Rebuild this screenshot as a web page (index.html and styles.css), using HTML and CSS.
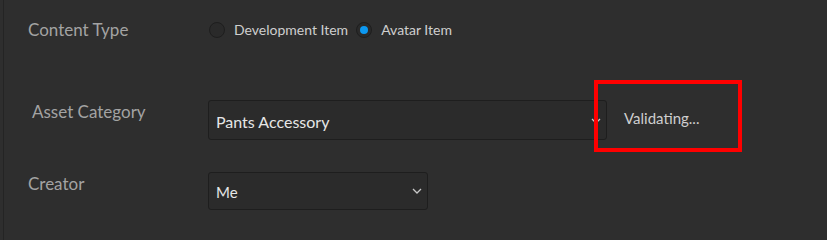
FILE: index.html
```html
<!DOCTYPE html>
<html>
<head>
<meta charset="utf-8">
<link rel="stylesheet" href="styles.css">
</head>
<body>
<div class="panel">
  <div class="row row-type">
    <span class="label">Content Type</span>
    <div class="radios">
      <span class="radio"></span><span class="radio-text">Development Item</span>
      <span class="radio radio-on"><span class="dot"></span></span><span class="radio-text">Avatar Item</span>
    </div>
  </div>
  <div class="row row-cat">
    <span class="label label-cat">Asset Category</span>
    <div class="select select-wide">
      <span class="select-text">Pants Accessory</span>
      <svg class="chev" width="10" height="6" viewBox="0 0 10 6"><path d="M1 1 L5 5 L9 1" fill="none" stroke="#c8c8c8" stroke-width="1.3"/></svg>
    </div>
    <span class="status">Validating...</span>
    <div class="highlight"></div>
  </div>
  <div class="row row-creator">
    <span class="label">Creator</span>
    <div class="select select-narrow">
      <span class="select-text small">Me</span>
      <svg class="chev" width="10" height="6" viewBox="0 0 10 6"><path d="M1 1 L5 5 L9 1" fill="none" stroke="#c8c8c8" stroke-width="1.3"/></svg>
    </div>
  </div>
</div>
</body>
</html>
```
FILE: styles.css
```css
html, body {
  margin: 0;
  padding: 0;
  background: #2e2e2e;
}
body {
  font-family: Lato, "Open Sans", sans-serif;
  min-height: 100vh;
  overflow: hidden;
}
.panel {
  margin-left: 3px;
  border-left: 1px solid #242424;
  min-height: 100vh;
  box-sizing: border-box;
}
.row {
  display: flex;
  position: relative;
}
.label {
  width: 180px;
  padding-left: 24px;
  flex: none;
  color: #a3a3a3;
  font-size: 17px;
  line-height: 24px;
}
.label-cat {
  width: 176px;
  padding-left: 28px;
}
.row-type {
  height: 59px;
  align-items: center;
}
.radios {
  display: flex;
  align-items: center;
  margin-left: 1px;
}
.radio {
  width: 14px;
  height: 14px;
  border-radius: 50%;
  border: 1px solid #1e1e1e;
  background: #2a2a2a;
  display: flex;
  align-items: center;
  justify-content: center;
  flex: none;
}
.radio-on .dot {
  width: 8px;
  height: 8px;
  border-radius: 50%;
  background: #0c99f2;
}
.radio-text {
  color: #cfcfcf;
  font-size: 14px;
  margin-left: 9px;
  margin-right: 8px;
}
.row-cat {
  margin-top: 41px;
  align-items: flex-start;
}
.select {
  height: 40px;
  box-sizing: border-box;
  border: 1px solid #1e1e1e;
  border-radius: 3px;
  background: #2b2b2b;
  display: flex;
  align-items: center;
  justify-content: space-between;
  padding: 0 5px 0 7px;
}
.select-wide {
  width: 399px;
  padding-top: 2px;
}
.select-narrow {
  width: 220px;
  height: 38px;
}
.select-text {
  color: #e6e6e6;
  font-size: 16px;
}
.select-text.small {
  font-size: 15px;
  padding-top: 2px;
}
.chev {
  display: block;
}
.status {
  margin-left: 17px;
  color: #cfcfcf;
  font-size: 15px;
  line-height: 36px;
}
.highlight {
  position: absolute;
  left: 590px;
  top: -20px;
  width: 140px;
  height: 64px;
  border: 4px solid #ff0000;
}
.row-creator {
  margin-top: 32px;
  align-items: flex-start;
}
```
